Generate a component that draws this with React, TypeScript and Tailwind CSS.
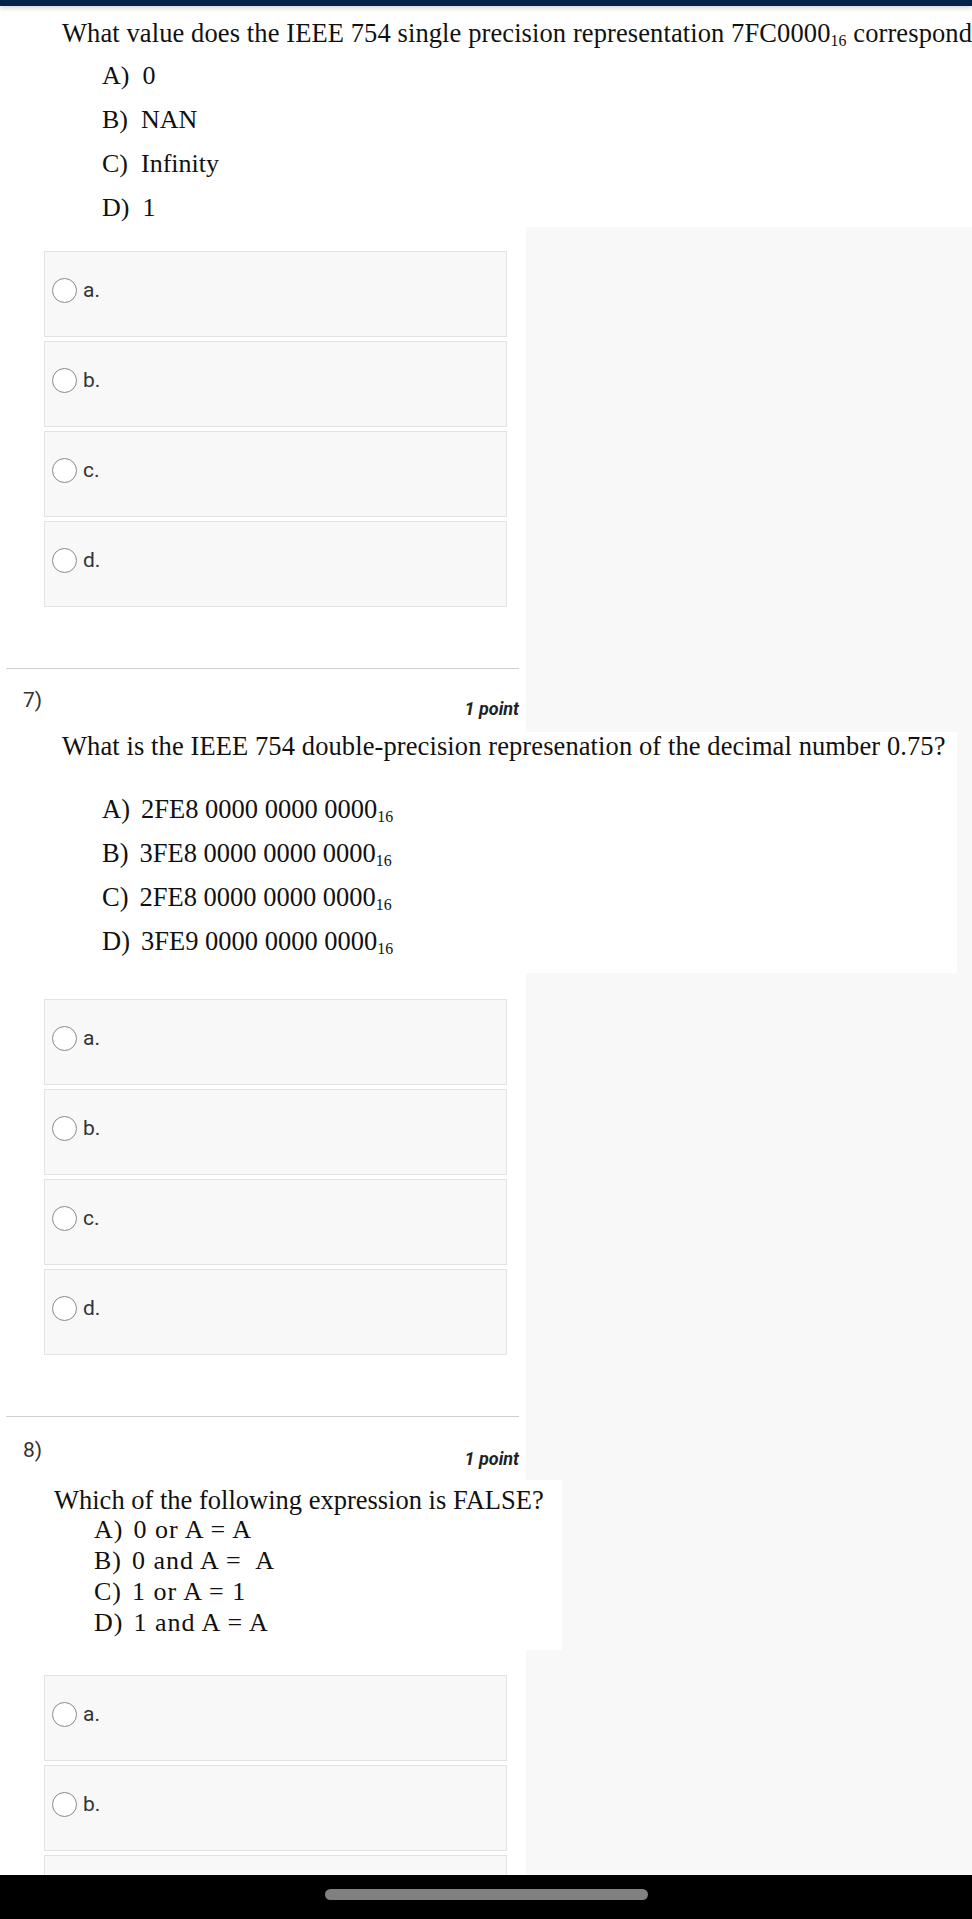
import React from "react";

const labels = ["a.", "b.", "c.", "d."];

function ChoiceBoxes() {
  return (
    <div className="ml-[44px] flex w-[463px] flex-col gap-[4px]">
      {labels.map((l) => (
        <label
          key={l}
          className="flex h-[86px] shrink-0 items-start border border-[#e3e3e3] bg-[#f8f8f8] pl-[7px] pt-[26px]"
        >
          <span className="h-[25px] w-[25px] shrink-0 rounded-full border-[1.5px] border-[#8a8a8a] bg-white" />
          <span className="ml-[6px] font-['Roboto',sans-serif] text-[21px] leading-[25px] text-[#333]">
            {l}
          </span>
        </label>
      ))}
    </div>
  );
}

function QuestionHeader({ num }: { num: string }) {
  return (
    <div className="flex justify-between pl-[23px] pr-[7px]">
      <span className="font-['Roboto',sans-serif] text-[21px] leading-[24px] text-[#333]">{num}</span>
      <span className="mt-[10px] font-['Roboto',sans-serif] text-[18px] font-bold italic leading-[22px] text-[#222]">
        1 point
      </span>
    </div>
  );
}

function Divider() {
  return <div className="ml-[6px] h-px w-[513px] bg-[#cfcfcf]" />;
}

const q6Options = [
  ["A)", "0"],
  ["B)", "NAN"],
  ["C)", "Infinity"],
  ["D)", "1"],
];

const q7Options = [
  ["A)", "2FE8 0000 0000 0000"],
  ["B)", "3FE8 0000 0000 0000"],
  ["C)", "2FE8 0000 0000 0000"],
  ["D)", "3FE9 0000 0000 0000"],
];

const q8Options = [
  ["A)", "0 or A = A"],
  ["B)", "0 and A =  A"],
  ["C)", "1 or A = 1"],
  ["D)", "1 and A = A"],
];

export default function App() {
  return (
    <div className="flex h-[1919px] w-full flex-col overflow-hidden bg-[#f8f8f8]">
      <div className="relative z-10 h-[6px] shrink-0 bg-[#052348] shadow-[0_2px_5px_rgba(0,0,0,0.18)]" />

      <main className="min-h-0 flex-1 overflow-hidden">
        <div className="w-[526px] bg-white font-['Liberation_Serif','Times_New_Roman',serif] text-[#111]">
          {/* question 6, its top is scrolled away */}
          <div className="h-[221px] w-[1000px] overflow-hidden bg-white pl-[62px] pt-[13px]">
            <p className="whitespace-nowrap text-[26.5px] leading-[28px] tracking-[0.1px]">
              What value does the IEEE 754 single precision representation 7FC0000
              <sub className="text-[0.6em]">16</sub> corresponds to?
            </p>
            <div className="mt-[7px] pl-[40px] text-[26px] leading-[44px]">
              {q6Options.map(([k, v], i) => (
                <div key={i}>
                  <span>{k}</span>
                  <span className="ml-[13px]">{v}</span>
                </div>
              ))}
            </div>
          </div>
          <div className="mt-[24px]">
            <ChoiceBoxes />
          </div>
          <div className="mt-[61px]">
            <Divider />
          </div>

          {/* question 7 */}
          <div className="mt-[19px]">
            <QuestionHeader num="7)" />
          </div>
          <div className="mt-[12px] h-[241px] w-[957px] overflow-hidden bg-white pl-[62px]">
            <p className="whitespace-nowrap text-[26.5px] leading-[28px] tracking-[0.1px]">
              What is the IEEE 754 double-precision represenation of the decimal number 0.75?
            </p>
            <div className="mt-[27px] pl-[40px] text-[26.5px] leading-[44px]">
              {q7Options.map(([k, v], i) => (
                <div key={i} className="whitespace-nowrap">
                  <span>{k}</span>
                  <span className="ml-[11px]">
                    {v}
                    <sub className="text-[0.6em]">16</sub>
                  </span>
                </div>
              ))}
            </div>
          </div>
          <div className="mt-[26px]">
            <ChoiceBoxes />
          </div>
          <div className="mt-[61px]">
            <Divider />
          </div>

          {/* question 8 */}
          <div className="mt-[21px]">
            <QuestionHeader num="8)" />
          </div>
          <div className="mt-[10px] h-[170px] w-[562px] overflow-hidden bg-white pl-[54px] pt-[6px]">
            <p className="whitespace-nowrap text-[26.5px] leading-[28px]">
              Which of the following expression is FALSE?
            </p>
            <div className="pl-[40px] text-[26px] leading-[31px] tracking-[1px]">
              {q8Options.map(([k, v], i) => (
                <div key={i} className="whitespace-pre">
                  <span>{k}</span>
                  <span className="ml-[10px]">{v}</span>
                </div>
              ))}
            </div>
          </div>
          <div className="mt-[25px]">
            <ChoiceBoxes />
          </div>
        </div>
      </main>

      <div className="flex h-[44px] shrink-0 justify-center bg-black pt-[14px]">
        <div className="h-[11px] w-[323px] rounded-full bg-[#808080]" />
      </div>
    </div>
  );
}
